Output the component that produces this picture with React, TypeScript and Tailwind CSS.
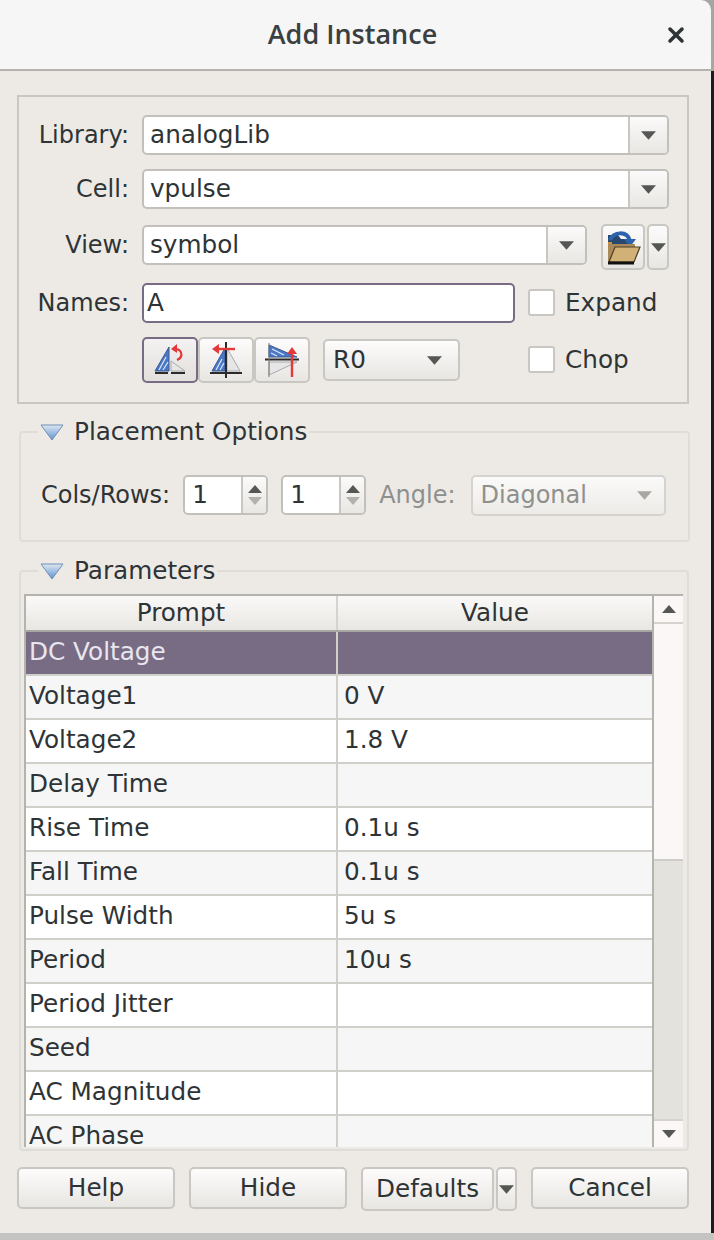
import React from 'react';
import { X } from 'lucide-react';

const rows: [string, string][] = [
  ['DC Voltage', ''],
  ['Voltage1', '0 V'],
  ['Voltage2', '1.8 V'],
  ['Delay Time', ''],
  ['Rise Time', '0.1u s'],
  ['Fall Time', '0.1u s'],
  ['Pulse Width', '5u s'],
  ['Period', '10u s'],
  ['Period Jitter', ''],
  ['Seed', ''],
  ['AC Magnitude', ''],
  ['AC Phase', ''],
];

const Caret = ({ className = 'w-[15px] h-[9px]', color = '#555753' }: { className?: string; color?: string }) => (
  <svg viewBox="0 0 14 8" className={className}>
    <path d="M0 0 H14 L7 8 Z" fill={color} />
  </svg>
);

const Combo = ({ value }: { value: string }) => (
  <div className="flex-1 h-[40px] flex rounded-[5px] border-2 border-[#c2c0bb] bg-white overflow-hidden">
    <div className="flex-1 px-[6px] leading-[36px]">{value}</div>
    <div className="w-[39px] border-l-2 border-[#c9c7c2] bg-gradient-to-b from-[#fbfafa] to-[#e9e7e3] flex items-center justify-center">
      <Caret />
    </div>
  </div>
);

const Label = ({ children }: { children: React.ReactNode }) => (
  <div className="w-[92px] text-right text-[24px]">{children}</div>
);

const OrientIcon = ({ kind }: { kind: 'rot' | 'sy' | 'sx' }) => (
  <svg viewBox="0 0 36 36" className="w-[36px] h-[36px]">
    {kind === 'rot' && (
      <g>
        <path d="M3 29 L17 5 V29 Z" fill="#4a78c8" stroke="#3a5a90" strokeWidth="1" />
        <path d="M7 28 L14 15 M11 28 L16 20" stroke="#dfe7f6" strokeWidth="1.2" />
        <path d="M19 29 V19 L33 29 Z" fill="#e6e6e6" stroke="#aaa" strokeWidth="1" />
        <path d="M3 31 H16 M19 31 H33" stroke="#2a2a2a" strokeWidth="2" />
        <path d="M23 7 C30 7 32 15 25 18" fill="none" stroke="#e23a3a" strokeWidth="2.2" />
        <path d="M25 2 L19 7 L25 11 Z" fill="#e23a3a" />
      </g>
    )}
    {kind === 'sy' && (
      <g>
        <path d="M4 29 L17 6 V29 Z" fill="#4a78c8" stroke="#3a5a90" strokeWidth="1" />
        <path d="M8 28 L14 17 M12 28 L16 21" stroke="#dfe7f6" strokeWidth="1.2" />
        <path d="M19 6 L32 29 H19 Z" fill="#e6e6e6" stroke="#aaa" strokeWidth="1" />
        <path d="M2 31 H34" stroke="#2a2a2a" strokeWidth="2" />
        <path d="M18 0 V36" stroke="#2a2a2a" strokeWidth="2" />
        <path d="M8 7 H27" stroke="#e23a3a" strokeWidth="2.4" />
        <path d="M11 2 L4 7 L11 12 Z" fill="#e23a3a" />
      </g>
    )}
    {kind === 'sx' && (
      <g>
        <path d="M5 3 L33 15 H5 Z" fill="#4a78c8" stroke="#3a5a90" strokeWidth="1" />
        <path d="M8 7 L20 13 M7 11 L13 14" stroke="#dfe7f6" strokeWidth="1.2" />
        <path d="M5 20 H33 L5 33 Z" fill="#e6e6e6" stroke="#aaa" strokeWidth="1" />
        <path d="M1 17.5 H35" stroke="#2a2a2a" strokeWidth="2" />
        <path d="M5 1 V35" stroke="#777" strokeWidth="1" />
        <path d="M28 10 V35" stroke="#e23a3a" strokeWidth="2.4" />
        <path d="M23 12 L28 5 L33 12 Z" fill="#e23a3a" />
      </g>
    )}
  </svg>
);

const FolderIcon = () => (
  <svg viewBox="0 0 36 36" className="w-[36px] h-[36px]">
    <path d="M3 6 H13 L16 10 H25 V22 H3 Z" fill="#26486f" />
    <path d="M5 11 C8 3 22 1 25 12" fill="none" stroke="#2d62ad" strokeWidth="4" />
    <path d="M19 10 L31 10 L25 18 Z" fill="#2d62ad" />
    <path d="M3 13 H7 V33 H3 Z" fill="#c98f3e" />
    <path d="M3 15 H30 V33 H3 Z" fill="#a98a58" />
    <path d="M10 18 H35 L29 33 H4 Z" fill="#d2b176" stroke="#4a3d28" strokeWidth="1.2" />
    <path d="M3 34 H29" stroke="#111" strokeWidth="3" />
  </svg>
);

const Spin = () => (
  <div className="w-[85px] h-[40px] flex rounded-[5px] border-2 border-[#c2c0bb] bg-white overflow-hidden">
    <div className="flex-1 px-[7px] leading-[36px]">1</div>
    <div className="w-[25px] border-l-2 border-[#c9c7c2] bg-gradient-to-b from-[#fbfafa] to-[#e9e7e3] flex flex-col items-center justify-center gap-[4px]">
      <Caret className="w-[14px] h-[8px] rotate-180" />
      <Caret className="w-[14px] h-[8px]" color="#b3b2ad" />
    </div>
  </div>
);

const Btn = ({ children, className = '' }: { children: React.ReactNode; className?: string }) => (
  <div className={`h-[42px] flex items-center justify-center rounded-[5px] border-2 border-[#c9c7c2] bg-gradient-to-b from-[#fdfcfc] to-[#e8e6e2] ${className}`}>
    {children}
  </div>
);

const Check = ({ label }: { label: string }) => (
  <div className="flex items-center gap-[10px]">
    <div className="w-[27px] h-[27px] rounded-[3px] border-2 border-[#c9c7c2] bg-white" />
    <span>{label}</span>
  </div>
);

const Group = ({ title, className, legendClass, children }: { title: string; className: string; legendClass: string; children: React.ReactNode }) => (
  <fieldset className={`border-2 border-[#dfddd8] rounded-[4px] ${className}`}>
    <legend className={`flex items-center gap-[10px] px-[2px] h-[28px] ${legendClass}`}>
      <svg viewBox="0 0 24 18" className="w-[24px] h-[18px]">
        <defs>
          <linearGradient id="tri" x1="0" y1="0" x2="0" y2="1">
            <stop offset="0" stopColor="#dfe7f2" />
            <stop offset="1" stopColor="#5f94cf" />
          </linearGradient>
        </defs>
        <path d="M1 2 H23 L12 17 Z" fill="url(#tri)" stroke="#6f8fb5" strokeWidth="1" />
      </svg>
      <span>{title}</span>
    </legend>
    {children}
  </fieldset>
);

export default function App() {
  return (
    <div
      className="w-[714px] h-[1240px] bg-gradient-to-b from-[#a5a5a3] to-[#c4c4c2] text-[#2e3436] text-[24.7px] overflow-hidden"
      style={{ fontFamily: '"DejaVu Sans", sans-serif' }}
    >
      <div className="w-[711px] h-[71px] bg-[#f6f6f6] border-b-2 border-[#b5b3ae] rounded-tr-[10px] flex items-center relative">
        <div
          className="flex-1 text-center font-semibold text-[27px] text-[#3a3f41] pr-[6px]"
          style={{ fontFamily: '"Open Sans", sans-serif' }}
        >
          Add Instance
        </div>
        <X className="absolute right-[23px] top-[23px] w-[24px] h-[24px] text-[#2e3436]" strokeWidth={3.5} />
      </div>

      <div className="w-[714px] h-[1162px] bg-[#edeae5] border-r-[3px] border-[#1c1c1c]">
        <div className="pl-[17px] pr-[22px] pt-[24px]">
          <div className="h-[309px] border-2 border-[#c9c7c2] px-[18px] pt-[18px] flex flex-col">
            <div className="flex items-center gap-[13px] h-[40px]">
              <Label>Library:</Label>
              <Combo value="analogLib" />
            </div>
            <div className="flex items-center gap-[13px] h-[40px] mt-[14px]">
              <Label>Cell:</Label>
              <Combo value="vpulse" />
            </div>
            <div className="flex items-center gap-[13px] h-[42px] mt-[15px]">
              <Label>View:</Label>
              <Combo value="symbol" />
              <div className="flex gap-[2px] ml-[1px] self-start">
                <Btn className="w-[44px] h-[46px]"><FolderIcon /></Btn>
                <Btn className="w-[22px] h-[46px]"><Caret /></Btn>
              </div>
            </div>
            <div className="flex items-center gap-[13px] h-[40px] mt-[17px]">
              <Label>Names:</Label>
              <div className="w-[373px] h-[40px] rounded-[5px] border-2 border-[#786c85] bg-white px-[3px] leading-[36px]">A</div>
              <Check label="Expand" />
            </div>
            <div className="flex items-center h-[46px] mt-[14px] pl-[105px]">
              <Btn className="w-[56px] h-[46px] !border-[#786c85] !from-[#f4f2f2] !to-[#e2dfdc]"><OrientIcon kind="rot" /></Btn>
              <Btn className="w-[56px] h-[46px]"><OrientIcon kind="sy" /></Btn>
              <Btn className="w-[56px] h-[46px]"><OrientIcon kind="sx" /></Btn>
              <Btn className="w-[137px] ml-[13px] !justify-between px-[8px]">
                <span>R0</span>
                <span className="pr-[8px]"><Caret /></span>
              </Btn>
              <div className="ml-[68px]"><Check label="Chop" /></div>
            </div>
          </div>

          <Group title="Placement Options" legendClass="-ml-[3px]" className="mt-[14px] ml-[2px] h-[124px] pl-[20px] pr-[22px]">
            <div className="flex items-center h-[40px] mt-[29px]">
              <div className="mr-[13px] text-[24px]">Cols/Rows:</div>
              <Spin />
              <div className="w-[13px]" />
              <Spin />
              <div className="ml-[13px] text-[#8e908d] text-[24px]">Angle:</div>
              <div className="ml-[15px] w-[195px] h-[41px] flex items-center justify-between rounded-[5px] border-2 border-[#d5d3ce] bg-gradient-to-b from-[#fbfafa] to-[#ecebe7] pl-[8px] pr-[12px] text-[#8e908d] text-[24px]">
                <span>Diagonal</span>
                <Caret color="#a8a7a2" />
              </div>
            </div>
          </Group>

          <Group title="Parameters" legendClass="ml-[14px]" className="mt-[15px] ml-[2px] h-[594px] pl-[3px] pr-[4px]">
            <div className="h-[553px] flex overflow-hidden border-t-2 border-[#b5b3ae] mt-[9px]">
              <div className="w-[630px] border-l-2 border-[#b5b3ae] border-r-2 flex flex-col overflow-hidden">
                <div className="h-[36px] shrink-0 flex bg-gradient-to-b from-[#fbf9f8] to-[#e9e7e3] border-b-2 border-[#a9a7a2]">
                  <div className="w-[312px] text-center border-r-2 border-[#d5d3ce] leading-[34px]">Prompt</div>
                  <div className="flex-1 text-center leading-[34px]">Value</div>
                </div>
                {rows.map(([prompt, value], i) => {
                  const bg = i === 0 ? 'bg-[#786c85] text-[#e8e6ee]' : i % 2 === 1 ? 'bg-[#f6f6f6]' : 'bg-white';
                  return (
                    <div key={prompt} className={`h-[44px] shrink-0 flex border-b-2 border-[#d0cfca] ${bg}`}>
                      <div className="w-[312px] pl-[3px] leading-[40px] border-r-2 border-[#d0cfca]">{prompt}</div>
                      <div className="flex-1 px-[6px] leading-[40px]">{value}</div>
                    </div>
                  );
                })}
              </div>
              <div className="w-[29px] flex flex-col bg-[#fbf7f7]">
                <div className="h-[28px] border-b-2 border-[#d5d3ce] flex items-center justify-center">
                  <Caret className="w-[14px] h-[8px] rotate-180" />
                </div>
                <div className="h-[235px]" />
                <div className="flex-1 bg-[#e4e2dd] border-t-2 border-[#cfcdc8]" />
                <div className="h-[28px] border-t-2 border-[#d5d3ce] flex items-center justify-center">
                  <Caret className="w-[14px] h-[8px]" />
                </div>
              </div>
            </div>
          </Group>

          <div className="flex items-start mt-[16px]">
            <Btn className="w-[158px]">Help</Btn>
            <Btn className="w-[158px] ml-[14px]">Hide</Btn>
            <Btn className="w-[133px] h-[44px] ml-[14px]">Defaults</Btn>
            <Btn className="w-[21px] h-[44px] ml-[2px]"><Caret /></Btn>
            <Btn className="w-[158px] ml-[14px]">Cancel</Btn>
          </div>
        </div>
      </div>
    </div>
  );
}
